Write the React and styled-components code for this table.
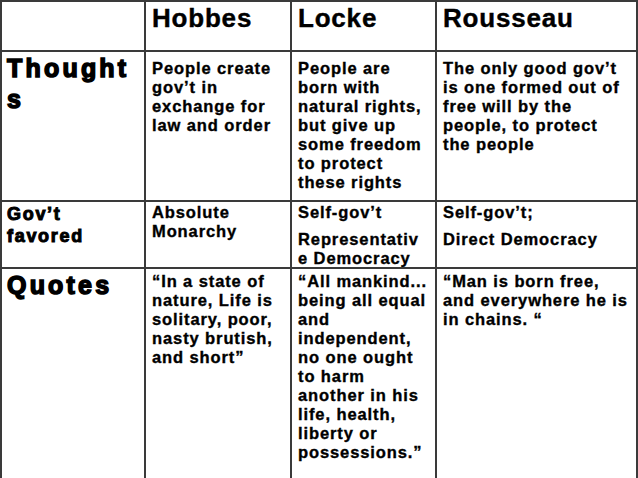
import React from 'react'
import styled, { createGlobalStyle } from 'styled-components'

const Global = createGlobalStyle`
  html, body { margin: 0; padding: 0; background: #fff; }
  body { width: 638px; height: 478px; overflow: hidden; }
`

const Table = styled.div`
  width: 638px;
  height: 480px;
  box-sizing: border-box;
  display: grid;
  grid-template-columns: 142px 144px 143px 199px;
  grid-template-rows: 48px 148px 65px 1fr;
  gap: 2px;
  padding: 2px;
  background: #3a3a3a;
  overflow: hidden;
  font-family: "Liberation Sans", Arial, sans-serif;
  color: #000;
`

const Cell = styled.div`
  background: #fff;
  padding: ${({ $pt = 0 }) => $pt}px ${({ $pr = 8 }) => $pr}px 0 6px;
  overflow: hidden;
  overflow-wrap: anywhere;
`

const ColTitle = styled.div`
  font-size: 26px;
  font-weight: 700;
  line-height: 30px;
  letter-spacing: 0.8px;
  -webkit-text-stroke: 0.4px #000;
`

const RowTitle = styled.div`
  margin-left: -1px;
  font-size: ${({ $small }) => ($small ? '18px' : '25px')};
  line-height: ${({ $small }) => ($small ? '22px' : '31px')};
  font-weight: 700;
  letter-spacing: ${({ $small }) => ($small ? '1.7px' : '3.2px')};
  -webkit-text-stroke: ${({ $small }) => ($small ? '1px' : '1.5px')} #000;
`

const Body = styled.p`
  margin: 0;
  font-size: 16.5px;
  line-height: 19px;
  font-weight: 700;
  letter-spacing: 0.9px;
  -webkit-text-stroke: 0.35px #000;
  & + & { margin-top: 8px; }
`

const cols = ['Hobbes', 'Locke', 'Rousseau']
// right padding per column, so each cell wraps where the slide does
const rightPad = [13, 6.8, 6.5]

const rows = [
  {
    title: ['Thought', 's'],
    pt: 7,
    tpt: 1,
    cells: [
      ['People create gov’t in exchange for law and order'],
      ['People are born with natural rights, but give up some freedom to protect these rights'],
      ['The only good gov’t is one formed out of free will by the people, to protect the people'],
    ],
  },
  {
    title: ['Gov’t', 'favored'],
    small: true,
    pt: 1,
    tpt: 1,
    cells: [
      ['Absolute Monarchy'],
      ['Self-gov’t', 'Representative Democracy'],
      ['Self-gov’t;', 'Direct Democracy'],
    ],
  },
  {
    title: ['Quotes'],
    pt: 3,
    tpt: 1,
    cells: [
      ['“In a state of nature, Life is solitary, poor, nasty brutish, and short”'],
      ['“All mankind... being all equal and independent, no one ought to harm another in his life, health, liberty or possessions.”'],
      ['“Man is born free, and everywhere he is in chains. “'],
    ],
  },
]

export default function App() {
  return (
    <>
      <Global />
      <Table>
        <Cell $pt={1} />
        {cols.map((c) => (
          <Cell $pt={1} key={c}>
            <ColTitle>{c}</ColTitle>
          </Cell>
        ))}
        {rows.map((r) => (
          <React.Fragment key={r.title.join('')}>
            <Cell $pt={r.tpt}>
              {r.title.map((t) => (
                <RowTitle $small={r.small} key={t}>{t}</RowTitle>
              ))}
            </Cell>
            {r.cells.map((ps, i) => (
              <Cell $pt={r.pt} $pr={rightPad[i]} key={i}>
                {ps.map((p) => (
                  <Body key={p}>{p}</Body>
                ))}
              </Cell>
            ))}
          </React.Fragment>
        ))}
      </Table>
    </>
  )
}
